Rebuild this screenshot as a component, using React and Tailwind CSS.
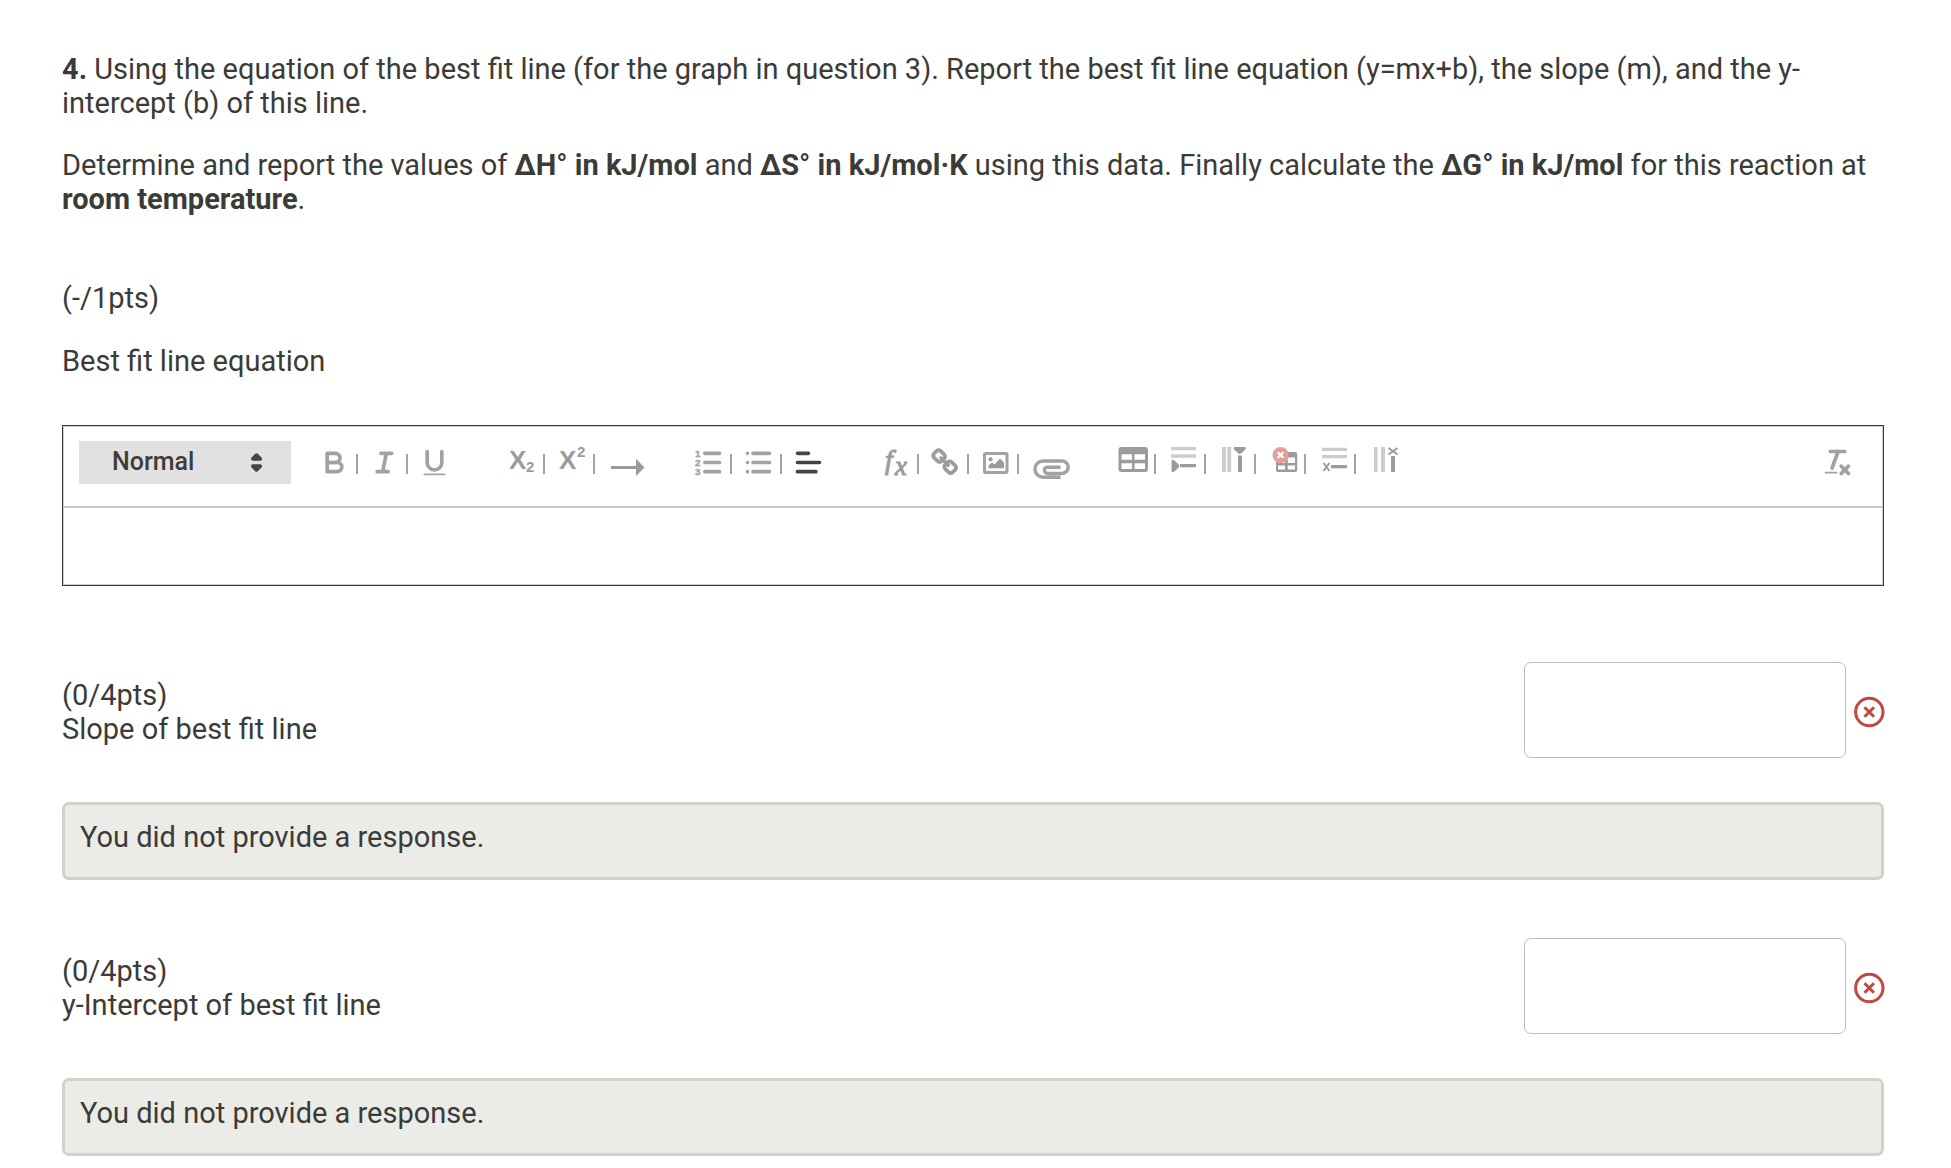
import { Fragment } from 'react';

const GRAY = '#a2a2a2';
const LIGHT = '#cccccc';

// Stroke icons on an 18 unit grid
function LineIcon({ children, color = GRAY }) {
  return (
    <svg
      viewBox="0 0 18 18"
      width="33"
      height="33"
      fill="none"
      stroke={color}
      strokeWidth="2"
      strokeLinecap="round"
      strokeLinejoin="round"
      aria-hidden="true"
    >
      {children}
    </svg>
  );
}

// Filled icons drawn at their real size
function SolidIcon({ children }) {
  return (
    <svg viewBox="0 0 33 33" width="33" height="33" fill="#9b9b9b" className="overflow-visible" aria-hidden="true">
      {children}
    </svg>
  );
}

const icons = {
  bold: (
    <LineIcon>
      <path d="M5,4H9.5A2.5,2.5,0,0,1,12,6.5v0A2.5,2.5,0,0,1,9.5,9H5V4Z" />
      <path d="M5,9h5.5A2.5,2.5,0,0,1,13,11.5v0A2.5,2.5,0,0,1,10.5,14H5V9Z" />
    </LineIcon>
  ),
  italic: (
    <LineIcon>
      <path d="M7 4H13M5 14H11M8 14L10 4" />
    </LineIcon>
  ),
  underline: (
    <LineIcon>
      <path d="M5,3V9a4,4,0,0,0,8,0V3" />
      <rect x="3" y="15" width="12" height="1" rx="0.5" fill={GRAY} stroke="none" />
    </LineIcon>
  ),
  sub: (
    <SolidIcon>
      <text x="4" y="23" fontSize="26" fontWeight="700" fontFamily="Liberation Sans, sans-serif">X</text>
      <text x="21" y="26" fontSize="15" fontWeight="700" fontFamily="Liberation Sans, sans-serif">2</text>
    </SolidIcon>
  ),
  sup: (
    <SolidIcon>
      <text x="4" y="23" fontSize="26" fontWeight="700" fontFamily="Liberation Sans, sans-serif">X</text>
      <text x="22" y="11" fontSize="15" fontWeight="700" fontFamily="Liberation Sans, sans-serif">2</text>
    </SolidIcon>
  ),
  arrow: (
    <SolidIcon>
      <path d="M6 20H31V12.7L39.5 21.4L31 30V23H6Z" />
    </SolidIcon>
  ),
  ordered: (
    <LineIcon>
      <path d="M7 4H15M7 9H15M7 14H15" />
      <g fill={GRAY} stroke={GRAY} strokeWidth="0.2" fontSize="5.4" fontWeight="700" fontFamily="Liberation Sans, sans-serif">
        <text x="1.6" y="6">1</text>
        <text x="1.6" y="11">2</text>
        <text x="1.6" y="16">3</text>
      </g>
    </LineIcon>
  ),
  bullet: (
    <LineIcon>
      <path d="M6 4H15M6 9H15M6 14H15M3 4H3M3 9H3M3 14H3" />
    </LineIcon>
  ),
  align: (
    <LineIcon color="#444444">
      <path d="M3 4H9M3 9H15M3 14H13" />
    </LineIcon>
  ),
  formula: (
    <SolidIcon>
      <g fontStyle="italic" stroke="#9b9b9b" strokeWidth="1" fontFamily="Liberation Serif, serif">
        <text x="6" y="23" fontSize="28">f</text>
        <text x="16" y="29" fontSize="27">x</text>
      </g>
    </SolidIcon>
  ),
  link: (
    <SolidIcon>
      <path
        transform="translate(2.5 2.5) scale(0.0158)"
        stroke="#9b9b9b"
        strokeWidth="60"
        d="M1456 1216q0-40-28-68l-208-208q-28-28-68-28-42 0-72 32 3 3 19 18.500t21.500 21.500 15 19 13 25.500 3.500 27.500q0 40-28 68t-68 28q-15 0-27.500-3.500t-25.500-13-19-15-21.500-21.500-18.500-19q-33 31-33 73 0 40 28 68l206 207q27 27 68 27 40 0 68-26l147-146q28-28 28-67zm-703-705q0-40-28-68l-206-207q-28-28-68-28-39 0-68 27l-147 146q-28 28-28 67 0 40 28 68l208 208q27 27 68 27 42 0 72-31-3-3-19-18.500t-21.500-21.500-15-19-13-25.500-3.500-27.500q0-40 28-68t68-28q15 0 27.500 3.500t25.500 13 19 15 21.500 21.500 18.500 19q33-31 33-73zm895 705q0 120-85 203l-147 146q-83 83-203 83-121 0-204-85l-206-207q-83-83-83-203 0-123 88-209l-88-88q-86 88-208 88-120 0-204-84l-208-208q-84-84-84-204t85-203l147-146q83-83 203-83 121 0 204 85l206 207q83 83 83 203 0 123-88 209l88 88q86-88 208-88 120 0 204 84l208 208q84 84 84 204z"
      />
    </SolidIcon>
  ),
  image: (
    <SolidIcon>
      <rect x="5.5" y="7.5" width="22.5" height="19" rx="1" fill="none" stroke={GRAY} strokeWidth="3" />
      <circle cx="11.5" cy="13.3" r="2.1" />
      <path d="M9.5 22.3V19.5L13 16.5L15.5 18.5L21 12.5L25 16.5V22.3Z" />
    </SolidIcon>
  ),
  clip: (
    <SolidIcon>
      <path
        d="M31.5 31.2H14A8.1 8.1 0 0 1 14 15H33A6.2 6.2 0 0 1 33 27.4H18.5A3.1 3.1 0 0 1 18.5 21.2H31.5"
        fill="none"
        stroke={GRAY}
        strokeWidth="3.5"
      />
    </SolidIcon>
  ),
  table: (
    <SolidIcon>
      <path
        fillRule="evenodd"
        d="M5.5 1H29A3 3 0 0 1 32 4V23A3 3 0 0 1 29 26H5.5A3 3 0 0 1 2.5 23V4A3 3 0 0 1 5.5 1ZM5.5 8.3V13.7H16V8.3ZM18.5 8.3V13.7H29V8.3ZM5.5 17.3V23H16V17.3ZM18.5 17.3V23H29V17.3Z"
      />
    </SolidIcon>
  ),
  rowInsert: (
    <SolidIcon>
      <path d="M5 1H30V4.2H5ZM5 8.3H30V11.7H5Z" fill={LIGHT} />
      <path d="M14 18H30V21.3H14Z" />
      <path d="M5.5 14.5Q5.5 13.5 7 13.7Q8.5 14 13 19Q13.5 20 13 21Q8.5 26 7 26Q5.5 26 5.5 25Z" />
    </SolidIcon>
  ),
  colInsert: (
    <SolidIcon>
      <path d="M6 1H10V26H6ZM11.2 1H15.2V26H11.2Z" fill={LIGHT} />
      <path d="M22 9.5H26V26H22Z" />
      <path d="M18.5 1H29Q30 1 29.7 2.5Q29 4 25 7.5Q23.8 8.3 22.5 7.5Q18.5 4 17.7 2.5Q17.5 1 18.5 1Z" />
    </SolidIcon>
  ),
  tableDelete: (
    <SolidIcon>
      <path
        fillRule="evenodd"
        d="M12 6H29.2A2 2 0 0 1 31.2 8V24A2 2 0 0 1 29.2 26H12A2 2 0 0 1 10 24V8A2 2 0 0 1 12 6ZM12 13.5V17H19V13.5ZM21.7 11.5V17H29V11.5ZM12 19.5V23.5H19V19.5ZM21.7 19.5V23.5H29V19.5Z"
      />
      <circle cx="14.5" cy="9" r="8" fill="#e49f98" />
      <path d="M11.7 6.2L17.3 11.8M17.3 6.2L11.7 11.8" stroke="white" strokeWidth="2.2" />
    </SolidIcon>
  ),
  rowDelete: (
    <SolidIcon>
      <path d="M6 1.7H31V5H6ZM6 9H31V12.3H6Z" fill={LIGHT} />
      <path d="M15 19H31V22.3H15Z" />
      <path d="M7.5 17L13.5 25M13.5 17L7.5 25" stroke="#9b9b9b" strokeWidth="2" />
    </SolidIcon>
  ),
  colDelete: (
    <SolidIcon>
      <path d="M8 1H11.500V26H8ZM15 1H19V26H15Z" fill={LIGHT} />
      <path d="M25 10H29V26H25Z" />
      <path d="M22.5 2L31.5 8.5M31.5 2L22.5 8.5" stroke="#9b9b9b" strokeWidth="2" />
    </SolidIcon>
  ),
  clean: (
    <LineIcon>
      <path d="M5 3H13M6 12L9.35 3M11 11L15 15M15 11L11 15" />
      <rect x="2" y="14" width="7" height="1" rx="0.5" fill={GRAY} stroke="none" />
    </LineIcon>
  ),
};

const groups = [
  ['bold', 'italic', 'underline'],
  ['sub', 'sup', 'arrow'],
  ['ordered', 'bullet', 'align'],
  ['formula', 'link', 'image', 'clip'],
  ['table', 'rowInsert', 'colInsert', 'tableDelete', 'rowDelete', 'colDelete'],
];

function ToolButton({ name }) {
  return (
    <button type="button" aria-label={name} className="flex h-[43px] w-[47px] items-center justify-center">
      {icons[name]}
    </button>
  );
}

function ToolGroup({ tools }) {
  return (
    <div className="flex items-start">
      {tools.map((name, i) => (
        <Fragment key={name}>
          {i > 0 && <span className="mt-[13px] mr-[3px] -ml-[2px] h-5 w-[2px] bg-[#a2a2a2]" />}
          <ToolButton name={name} />
        </Fragment>
      ))}
    </div>
  );
}

function Editor() {
  return (
    <div className="mt-[47px] border border-[#3b3b38]">
      <div className="border border-[#cccccc]">
        <div className="flex items-start border-b-2 border-[#cccccc] pt-[14px] pr-[21px] pb-[22px] pl-[15px]">
          <div className="relative mr-5 w-[212px] bg-[#e1e1e1]">
            <select
              aria-label="Text style"
              defaultValue="normal"
              className="block h-[43px] w-full appearance-none pb-[2px] pl-[33px] text-[25px] font-medium text-[#3d3d39]"
            >
              <option value="normal">Normal</option>
            </select>
            <span className="pointer-events-none absolute top-[5px] right-[18px]">
              <LineIcon color="#444444">
                <path d="M7 11L9 13L11 11ZM7 7L9 5L11 7Z" fill="#444444" />
              </LineIcon>
            </span>
          </div>
          <div className="flex gap-10">
            {groups.map((tools) => (
              <ToolGroup key={tools[0]} tools={tools} />
            ))}
          </div>
          <div className="ml-auto">
            <ToolButton name="clean" />
          </div>
        </div>
        <textarea aria-label="Best fit line equation" className="block h-[76px] w-full resize-none px-4 py-5 outline-none" />
      </div>
    </div>
  );
}

function AnswerRow({ id, label, className }) {
  return (
    <section className={className}>
      <div className="flex items-center">
        <div className="flex-1 pt-1">
          <p>(0/4pts)</p>
          <label htmlFor={id}>{label}</label>
        </div>
        <input
          id={id}
          type="text"
          className="mr-2 h-24 w-[322px] rounded-[7px] border border-[#bbbbbb] px-4 outline-none"
        />
        <svg
          viewBox="0 0 30 30"
          fill="none"
          stroke="#bd4a3d"
          strokeWidth="3"
          className="mt-1 size-[30px] overflow-visible"
          aria-label="Incorrect"
        >
          <circle cx="15.3" cy="15" r="13.7" />
          <path d="M10.5 10.3L20 19.8M20 10.3L10.5 19.8" />
        </svg>
      </div>
      <div className="mt-11 rounded-[7px] border-[3px] border-[#d0d2c7] bg-[#ebece7] px-[15px] pt-[15px] pb-[23px]">
        You did not provide a response.
      </div>
    </section>
  );
}

export default function App() {
  return (
    <main className="bg-white pt-[52px] pr-[67px] pb-3 pl-[62px] font-[Roboto,sans-serif] text-[29px] leading-[34px] text-[#3b3b38]">
      <p>
        <b>4.</b> Using the equation of the best fit line (for the graph in question 3). Report the best fit line
        equation (y=mx+b), the slope (m), and the y-intercept (b) of this line.
      </p>
      <p className="mt-7">
        Determine and report the values of <b>ΔH° in kJ/mol</b> and <b>ΔS° in kJ/mol·K</b> using this data. Finally
        calculate the <b>ΔG° in kJ/mol</b> for this reaction at <b>room temperature</b>.
      </p>

      <p className="mt-[65px]">(-/1pts)</p>
      <p className="mt-[29px]">Best fit line equation</p>
      <Editor />

      <AnswerRow id="slope" label="Slope of best fit line" className="mt-[76px]" />
      <AnswerRow id="intercept" label="y-Intercept of best fit line" className="mt-[58px]" />
    </main>
  );
}
